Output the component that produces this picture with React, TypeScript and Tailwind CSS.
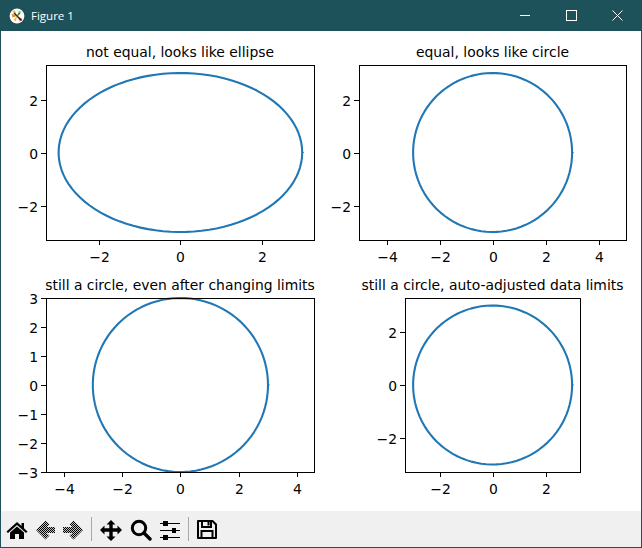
import React from 'react';

const BLUE = '#1f77b4';

interface PlotProps {
  title: string;
  // axes box, in page pixels
  left: number;
  right: number;
  top: number;
  bottom: number;
  // page pixel of data 0 and pixels per data unit
  cx: number;
  cy: number;
  sx: number;
  sy: number;
  xTicks: number[];
  yTicks: number[];
  // top left of the grid cell on the page
  ox: number;
  oy: number;
}

const fmt = (n: number) => (n < 0 ? `\u2212${-n}` : `${n}`);

const circlePoints = (cx: number, cy: number, sx: number, sy: number) => {
  const pts: string[] = [];
  for (let i = 0; i < 100; i++) {
    const t = (i / 99) * Math.PI * 2;
    pts.push(`${(cx + 3 * Math.cos(t) * sx).toFixed(2)},${(cy - 3 * Math.sin(t) * sy).toFixed(2)}`);
  }
  return pts.join(' ');
};

const Plot: React.FC<PlotProps> = ({ title, left, right, top, bottom, cx, cy, sx, sy, xTicks, yTicks, ox, oy }) => {
  const endX = cx + 3 * sx;
  return (
    <svg width={320} height={240} viewBox={`${ox} ${oy} 320 240`} className="block">
      <polyline
        points={circlePoints(cx, cy, sx, sy)}
        fill="none"
        stroke={BLUE}
        strokeWidth={2.08}
        strokeLinecap="square"
        strokeLinejoin="round"
      />
      {/* little nub where the line starts and ends */}
      <line x1={endX} x2={endX + 1.6} y1={cy} y2={cy} stroke={BLUE} strokeWidth={1.2} />
      <rect
        x={left + 0.5}
        y={top + 0.5}
        width={right - left}
        height={bottom - top}
        fill="none"
        stroke="#000"
        strokeWidth={1}
        shapeRendering="crispEdges"
      />
      {xTicks.map((t) => {
        const x = Math.round(cx + t * sx);
        return (
          <g key={t}>
            <line x1={x + 0.5} x2={x + 0.5} y1={bottom + 1} y2={bottom + 5} stroke="#000" shapeRendering="crispEdges" />
            <text x={x + 0.5} y={bottom + 22} textAnchor="middle" fontSize={13.9} fill="#000" fontFamily="'DejaVu Sans', sans-serif">
              {fmt(t)}
            </text>
          </g>
        );
      })}
      {yTicks.map((t) => {
        const y = Math.round(cy - t * sy);
        return (
          <g key={t}>
            <line x1={left - 5} x2={left} y1={y + 0.5} y2={y + 0.5} stroke="#000" shapeRendering="crispEdges" />
            <text x={left - 8} y={y + 5.5} textAnchor="end" fontSize={13.9} fill="#000" fontFamily="'DejaVu Sans', sans-serif">
              {fmt(t)}
            </text>
          </g>
        );
      })}
      <text x={(left + right) / 2} y={top - 8} textAnchor="middle" fontSize={13.9} fill="#000" fontFamily="'DejaVu Sans', sans-serif">
        {title}
      </text>
    </svg>
  );
};

const MplLogo = () => (
  <svg width={16} height={16} viewBox="0 0 16 16">
    <circle cx={8} cy={8} r={7.4} fill="#fff" />
    <path d="M8 8 L2.5 5.5 L3.5 9.5 Z" fill="#f08a1c" />
    <path d="M8 8 L3 3 L6 2.5 Z" fill="#f5b041" />
    <path d="M8 8 L10 2.5 L12.5 4 Z" fill="#9ccb62" />
    <path d="M8 8 L7 13.5 L4.5 12 Z" fill="#e8c33a" />
    <path d="M8 8 L13.5 11 L11 13.5 Z" fill="#e0552b" />
    <path d="M5 5 L12.5 12.5" stroke="#222" strokeWidth={1.2} />
    <path d="M8 8 L11 5" stroke="#3d7a4a" strokeWidth={1.2} />
  </svg>
);

const Stipple = ({ id }: { id: string }) => (
  <pattern id={id} width={2} height={2} patternUnits="userSpaceOnUse">
    <rect width={2} height={2} fill="#000" fillOpacity={0.2} />
    <rect width={1} height={1} fill="#000" shapeRendering="crispEdges" />
    <rect x={1} y={1} width={1} height={1} fill="#000" shapeRendering="crispEdges" />
  </pattern>
);

const HomeIcon = () => (
  <svg width={24} height={24} viewBox="0 0 24 24">
    <path d="M12 5 L16.5 9 V6 H19 V11.2 L22.5 14.5 L21 16 L12 8 L3 16 L1.5 14.5 Z" fill="#000" />
    <path d="M5 15.5 L12 9.5 L19 15.5 V22 H14 V17 H10 V22 H5 Z" fill="#000" />
  </svg>
);

const BackIcon = () => (
  <svg width={24} height={24} viewBox="0 0 24 24">
    <defs>
      <Stipple id="back-stipple" />
    </defs>
    <path d="M3 13 L12.5 3.5 L16.5 7.5 L13.5 10 H22 V16 H13.5 L16.5 18.5 L12.5 22.5 Z" fill="url(#back-stipple)" />
  </svg>
);

const ForwardIcon = () => (
  <svg width={24} height={24} viewBox="0 0 24 24">
    <defs>
      <Stipple id="forward-stipple" />
    </defs>
    <path d="M22 13 L12.5 3.5 L8.5 7.5 L11.5 10 H2 V16 H11.5 L8.5 18.5 L12.5 22.5 Z" fill="url(#forward-stipple)" />
  </svg>
);

const MoveIcon = () => (
  <svg width={24} height={24} viewBox="0 0 24 24" className="overflow-visible">
    <path
      d="M12 3 L16.5 7.5 H13.7 V11.3 H18.5 V8.5 L23 13 L18.5 17.5 V14.7 H13.7 V19.5 H16.5 L12 24 L7.5 19.5 H10.3 V14.7 H5.5 V17.5 L1 13 L5.5 8.5 V11.3 H10.3 V7.5 H7.5 Z"
      fill="#000"
    />
  </svg>
);

const ZoomIcon = () => (
  <svg width={24} height={24} viewBox="0 0 24 24">
    <circle cx={10} cy={11} r={6.7} fill="none" stroke="#000" strokeWidth={3} />
    <path d="M15 16 L21 22" stroke="#000" strokeWidth={3.4} strokeLinecap="round" />
  </svg>
);

const SlidersIcon = () => (
  <svg width={24} height={24} viewBox="0 0 24 24" shapeRendering="crispEdges">
    <path d="M2 6 H22 V7 H2 Z M2 13 H22 V14 H2 Z M2 20 H22 V21 H2 Z" fill="#000" />
    <rect x={5} y={4} width={5} height={5} fill="#000" />
    <rect x={14} y={11} width={4} height={5} fill="#000" />
    <rect x={5} y={18} width={5} height={5} fill="#000" />
  </svg>
);

const SaveIcon = () => (
  <svg width={24} height={24} viewBox="0 0 24 24">
    <path d="M3 4 H17.5 L21 7.5 V21 H3 Z" fill="none" stroke="#000" strokeWidth={2} strokeLinejoin="round" />
    <path d="M7 4 V10 H16 V4" fill="none" stroke="#000" strokeWidth={2} />
    <rect x={12.5} y={5} width={2} height={3.5} fill="#000" />
    <path d="M6.5 21 V14 H17.5 V21" fill="none" stroke="#000" strokeWidth={2} />
  </svg>
);

const ToolButton: React.FC<{ children: React.ReactNode; className?: string }> = ({ children, className = '' }) => (
  <div className={`w-6 h-6 flex items-center justify-center ${className}`}>{children}</div>
);

const Separator = () => <div className="w-px h-6 bg-[#a8a8a8] mx-[6px]" />;

export default function App() {
  return (
    <div className="w-[642px] h-[548px] flex flex-col bg-[#1e525a] overflow-hidden">
      {/* title bar */}
      <div className="h-[31px] flex items-center text-white shrink-0">
        <div className="ml-[9px] mr-[6px] flex items-center">
          <MplLogo />
        </div>
        <span className="text-[11.5px] font-['Open_Sans',sans-serif]">Figure 1</span>
        <div className="ml-auto flex items-center h-full pr-[2px]">
          <div className="w-[46px] h-full flex items-center justify-center">
            <div className="w-[10px] h-px bg-white" />
          </div>
          <div className="w-[46px] h-full flex items-center justify-center">
            <div className="w-[11px] h-[11px] border border-white" />
          </div>
          <div className="w-[46px] h-full flex items-center justify-center">
            <svg width={11} height={11} viewBox="0 0 11 11">
              <path d="M0.5 0.5 L10.5 10.5 M10.5 0.5 L0.5 10.5" stroke="#fff" strokeWidth={1} />
            </svg>
          </div>
        </div>
      </div>

      {/* figure + toolbar */}
      <div className="flex-1 mx-px mb-px flex flex-col bg-white">
        <div className="grid grid-cols-[320px_320px] grid-rows-[240px_240px]">
          <Plot
            title="not equal, looks like ellipse"
            left={46} right={314} top={65} bottom={240}
            cx={180.4} cy={152.5} sx={40.6} sy={26.5}
            xTicks={[-2, 0, 2]} yTicks={[-2, 0, 2]}
            ox={1} oy={31}
          />
          <Plot
            title="equal, looks like circle"
            left={359} right={626} top={65} bottom={240}
            cx={492.6} cy={152.5} sx={26.5} sy={26.5}
            xTicks={[-4, -2, 0, 2, 4]} yTicks={[-2, 0, 2]}
            ox={321} oy={31}
          />
          <Plot
            title="still a circle, even after changing limits"
            left={46} right={314} top={298} bottom={472}
            cx={180.4} cy={385} sx={29.2} sy={29}
            xTicks={[-4, -2, 0, 2, 4]} yTicks={[-3, -2, -1, 0, 1, 2, 3]}
            ox={1} oy={271}
          />
          <Plot
            title="still a circle, auto-adjusted data limits"
            left={405} right={580} top={298} bottom={472}
            cx={492.6} cy={385} sx={26.5} sy={26.5}
            xTicks={[-2, 0, 2]} yTicks={[-2, 0, 2]}
            ox={321} oy={271}
          />
        </div>
        <div className="flex-1 bg-[#f0f0f0] flex items-center pl-[4px]">
          <div className="flex gap-[4px]">
            <ToolButton><HomeIcon /></ToolButton>
            <ToolButton><BackIcon /></ToolButton>
            <ToolButton><ForwardIcon /></ToolButton>
          </div>
          <Separator />
          <div className="flex gap-[5px] ml-px">
            <ToolButton><MoveIcon /></ToolButton>
            <ToolButton className="ml-px"><ZoomIcon /></ToolButton>
            <ToolButton><SlidersIcon /></ToolButton>
          </div>
          <Separator />
          <ToolButton><SaveIcon /></ToolButton>
        </div>
      </div>
    </div>
  );
}
